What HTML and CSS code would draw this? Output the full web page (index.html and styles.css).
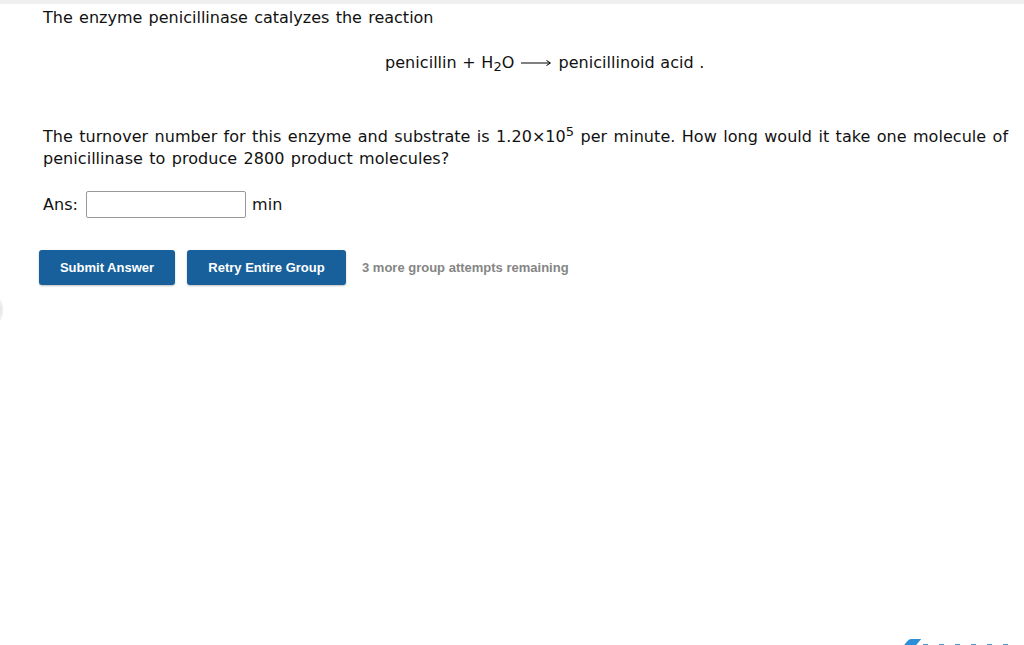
FILE: index.html
```html
<!DOCTYPE html>
<html>
<head>
<meta charset="utf-8">
<link rel="stylesheet" href="styles.css">
</head>
<body>
<div class="topbar"></div>
<div class="edge"></div>
<main class="content">
  <p class="intro">The enzyme penicillinase catalyzes the reaction</p>
  <div class="equation">penicillin + H<sub>2</sub>O <svg class="arrow" width="31" height="8" viewBox="0 0 31 8"><line x1="0" y1="4" x2="29" y2="4" stroke="#000" stroke-width="1"/><path d="M25.5 1.5 L29.5 4 L25.5 6.5" fill="none" stroke="#000" stroke-width="1"/></svg> penicillinoid acid .</div>
  <p class="question">The turnover number for this enzyme and substrate is 1.20×10<sup>5</sup> per minute. How long would it take one molecule of penicillinase to produce 2800 product molecules?</p>
  <div class="answer">
    <label>Ans:</label>
    <input class="ansbox" type="text">
    <span>min</span>
  </div>
  <div class="actions">
    <button class="btn btn-submit">Submit Answer</button>
    <button class="btn btn-retry">Retry Entire Group</button>
    <span class="remaining">3 more group attempts remaining</span>
  </div>
</main>
<div class="logo"><span class="logo-mark"></span><span class="logo-dots"></span></div>
</body>
</html>
```

FILE: styles.css
```css
html, body {
  margin: 0;
  padding: 0;
  background: #fff;
  height: 645px;
  overflow: hidden;
}
body {
  font-family: "DejaVu Sans", Verdana, sans-serif;
  font-size: 16px;
  letter-spacing: 0.05px;
  word-spacing: 1.2px;
  color: #111;
  position: relative;
}
.topbar {
  height: 4px;
  background: #efefef;
}
.edge {
  position: absolute;
  left: -6px;
  top: 298px;
  width: 9px;
  height: 24px;
  border-radius: 50%;
  background: radial-gradient(circle at left, #d4d4d4, rgba(230,230,230,0));
}
.content {
  padding: 0 8px 0 43px;
}
.intro {
  margin: 0;
  padding-top: 4px;
  line-height: 20px;
  letter-spacing: 0;
}
.equation {
  margin-top: 25px;
  padding-left: 342px;
  line-height: 20px;
  word-spacing: 0.4px;
}
.equation sub {
  font-size: 13px;
  vertical-align: -3px;
  line-height: 0;
}
.arrow {
  vertical-align: 1px;
  margin: 0 1px;
}
.question {
  margin: 53px 0 0;
  line-height: 22px;
}
.question sup {
  font-size: 13px;
  vertical-align: 6px;
  line-height: 0;
}
.answer {
  display: flex;
  align-items: center;
  gap: 6px;
  margin-top: 21px;
}
.answer label {
  margin-right: 2px;
}
.ansbox {
  width: 160px;
  height: 27px;
  box-sizing: border-box;
  border: 1px solid #999;
  border-radius: 2px;
  margin: 0;
  padding: 2px 4px;
  font: inherit;
}
.actions {
  display: flex;
  align-items: center;
  gap: 12px;
  margin-top: 32px;
  margin-left: -4px;
  word-spacing: 0;
  letter-spacing: 0;
}
.btn {
  height: 35px;
  border: none;
  border-radius: 3px;
  background: #17609b;
  color: #fff;
  font-family: "Liberation Sans", Arial, sans-serif;
  font-weight: bold;
  font-size: 13px;
  box-shadow: 0 1px 2px rgba(0,0,0,0.25);
  padding: 0;
}
.btn-submit { width: 136px; }
.btn-retry { width: 159px; }
.remaining {
  margin-left: 4px;
  font-family: "Liberation Sans", Arial, sans-serif;
  font-weight: bold;
  font-size: 13px;
  color: #858585;
}
.logo {
  position: absolute;
  left: 905px;
  top: 639px;
  display: flex;
  gap: 6px;
}
.logo-mark {
  width: 12px;
  height: 10px;
  background: #2a8fd8;
  transform: skewX(-40deg);
  border-radius: 2px 0 0 0;
}
.logo-dots {
  width: 90px;
  height: 2px;
  margin-top: 5px;
  background: repeating-linear-gradient(90deg, #4a9bd5 0 5px, transparent 5px 16px);
}
```
